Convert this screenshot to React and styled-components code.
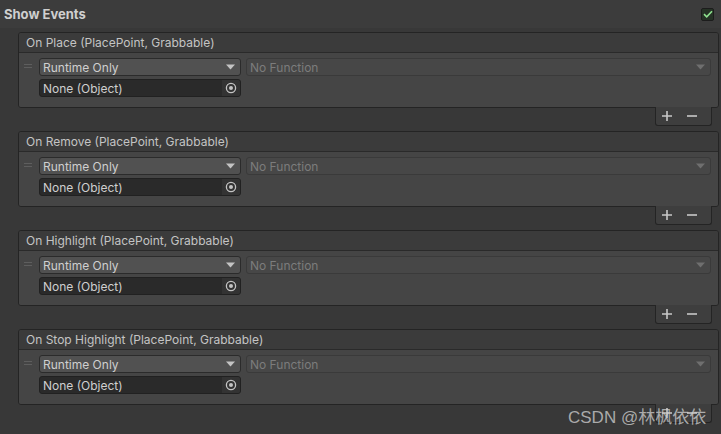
import styled, { createGlobalStyle } from 'styled-components';

const GlobalStyle = createGlobalStyle`
  html, body {
    margin: 0;
    padding: 0;
    background: #383838;
    font-family: Inter, "Noto Sans", sans-serif;
    overflow: hidden;
  }
`;

const events = [
  'On Place (PlacePoint, Grabbable)',
  'On Remove (PlacePoint, Grabbable)',
  'On Highlight (PlacePoint, Grabbable)',
  'On Stop Highlight (PlacePoint, Grabbable)',
];

const Arrow = ({ dim }) => (
  <svg width="9" height="6" viewBox="0 0 9 6">
    <path d="M0 0.5 H9 L4.5 5.5 Z" fill={dim ? '#6f6f6f' : '#c4c4c4'} />
  </svg>
);

const Target = () => (
  <svg width="12" height="12" viewBox="0 0 12 12">
    <circle cx="6" cy="6" r="4.6" fill="none" stroke="#c4c4c4" strokeWidth="1.3" />
    <circle cx="6" cy="6" r="2" fill="#c4c4c4" />
  </svg>
);

const Plus = () => (
  <svg width="12" height="12" viewBox="0 0 12 12">
    <path d="M6 1 V11 M1 6 H11" stroke="#c8c8c8" strokeWidth="1.6" />
  </svg>
);

const Minus = () => (
  <svg width="12" height="12" viewBox="0 0 12 12">
    <path d="M1 6 H11" stroke="#c8c8c8" strokeWidth="1.6" />
  </svg>
);

const EventBlock = ({ title }) => (
  <Block>
    <Box>
      <TitleBar>{title}</TitleBar>
      <Body>
        <Handle>
          <span />
          <span />
        </Handle>
        <Fields>
          <Row>
            <Dropdown>
              <span>Runtime Only</span>
              <Arrow />
            </Dropdown>
            <Dropdown disabled>
              <span>No Function</span>
              <Arrow dim />
            </Dropdown>
          </Row>
          <Row>
            <ObjectField>
              <span>None (Object)</span>
              <Picker>
                <Target />
              </Picker>
            </ObjectField>
          </Row>
        </Fields>
      </Body>
    </Box>
    <Footer>
      <FootButton><Plus /></FootButton>
      <FootButton><Minus /></FootButton>
    </Footer>
  </Block>
);

const App = () => (
  <Page>
    <GlobalStyle />
    <Header>
      <HeaderTitle>Show Events</HeaderTitle>
      <Check>
        <svg width="10" height="8" viewBox="0 0 10 8">
          <path d="M1 4.2 L3.7 6.8 L9 1.2" fill="none" stroke="#8fe38f" strokeWidth="1.6" />
        </svg>
      </Check>
    </Header>
    <List>
      {events.map(e => (
        <EventBlock key={e} title={e} />
      ))}
    </List>
    <Watermark>CSDN @林枫依依</Watermark>
  </Page>
);

export default App;

const Page = styled.div`
  position: relative;
  width: 721px;
  height: 434px;
  background: #383838;
  overflow: hidden;
`;

const Header = styled.div`
  height: 28px;
  display: flex;
  align-items: center;
  justify-content: space-between;
  padding: 0 7px 0 4px;
  background: #3c3c3c;
`;

const HeaderTitle = styled.div`
  font-size: 13px;
  font-weight: 700;
  color: #cfcfcf;
`;

const Check = styled.div`
  width: 13px;
  height: 13px;
  box-sizing: border-box;
  border: 1px solid #1c1c1c;
  border-radius: 2px;
  background: #253225;
  display: flex;
  align-items: center;
  justify-content: center;
`;

const List = styled.div`
  display: flex;
  flex-direction: column;
  gap: 5px;
  padding: 4px 2px 0 18px;
`;

const Block = styled.div`
  display: flex;
  flex-direction: column;
`;

const Box = styled.div`
  border: 1px solid #242424;
  border-radius: 3px;
  overflow: hidden;
`;

const TitleBar = styled.div`
  height: 19px;
  display: flex;
  align-items: center;
  padding-left: 7px;
  font-size: 12px;
  color: #c4c4c4;
  background: #3b3b3b;
  border-bottom: 1px solid #2a2a2a;
`;

const Body = styled.div`
  display: flex;
  height: 54px;
  padding-top: 5px;
  box-sizing: border-box;
  background: #454545;
`;

const Handle = styled.div`
  width: 20px;
  display: flex;
  flex-direction: column;
  gap: 2px;
  padding: 6px 0 0 5px;
  box-sizing: border-box;

  span {
    display: block;
    width: 8px;
    height: 1px;
    background: #5e5e5e;
  }
`;

const Fields = styled.div`
  flex: 1;
  display: flex;
  flex-direction: column;
  gap: 3px;
  padding-right: 7px;
`;

const Row = styled.div`
  display: flex;
  gap: 5px;
`;

const Dropdown = styled.div`
  flex: ${p => (p.disabled ? 1 : 'none')};
  width: ${p => (p.disabled ? 'auto' : '202px')};
  height: 18px;
  box-sizing: border-box;
  display: flex;
  align-items: center;
  justify-content: space-between;
  padding: 0 5px 0 3px;
  font-size: 12px;
  color: ${p => (p.disabled ? '#7c7c7c' : '#cfcfcf')};
  background: ${p => (p.disabled ? '#474747' : '#515151')};
  border: 1px solid ${p => (p.disabled ? '#3a3a3a' : '#2b2b2b')};
  border-radius: 3px;
`;

const ObjectField = styled.div`
  width: 202px;
  height: 18px;
  box-sizing: border-box;
  display: flex;
  align-items: center;
  justify-content: space-between;
  padding-left: 3px;
  font-size: 12px;
  color: #cfcfcf;
  background: #2a2a2a;
  border: 1px solid #212121;
  border-radius: 3px;
  overflow: hidden;
`;

const Picker = styled.div`
  width: 18px;
  height: 100%;
  display: flex;
  align-items: center;
  justify-content: center;
  background: #333333;
`;

const Footer = styled.div`
  align-self: flex-end;
  margin-right: 7px;
  margin-top: -1px;
  width: 57px;
  height: 19px;
  box-sizing: border-box;
  display: flex;
  align-items: center;
  gap: 13px;
  padding-left: 5px;
  background: #3e3e3e;
  border: 1px solid #242424;
  border-top: none;
  border-radius: 0 0 3px 3px;
`;

const FootButton = styled.span`
  width: 12px;
  height: 12px;
  display: flex;
`;

const Watermark = styled.div`
  position: absolute;
  left: 568px;
  top: 403px;
  font-size: 17px;
  font-family: "Liberation Sans", "Noto Sans CJK SC", sans-serif;
  color: rgba(210, 210, 210, 0.75);
`;
